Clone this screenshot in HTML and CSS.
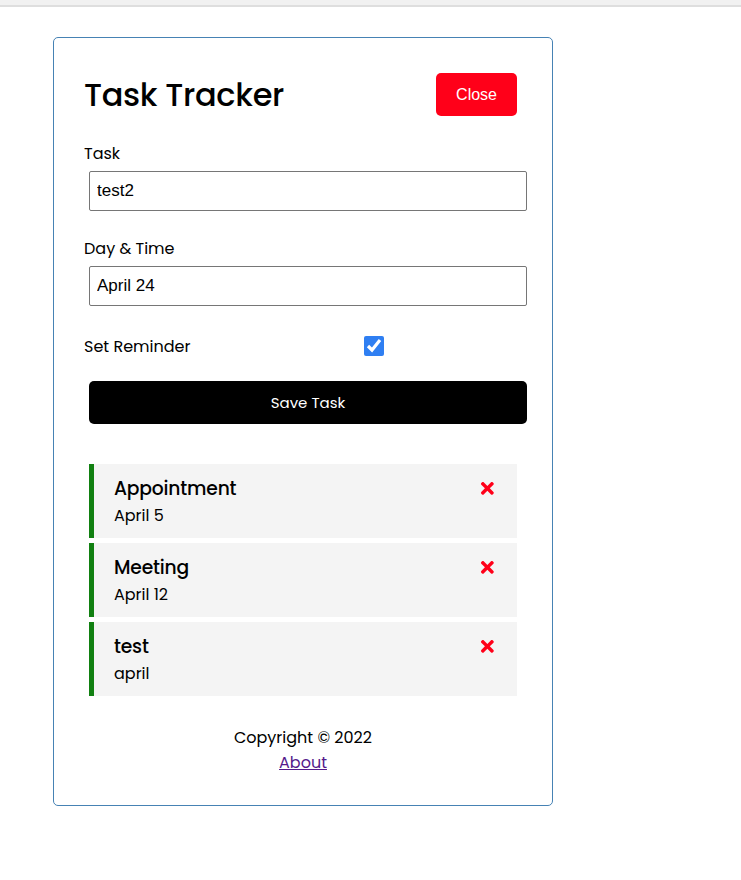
FILE: index.html
```html
<!DOCTYPE html>
<html lang="en">
<head>
<meta charset="utf-8">
<title>Task Tracker</title>
<link rel="stylesheet" href="styles.css">
</head>
<body>
<div class="topbar"></div>
<div class="container">
  <header class="header">
    <h1>Task Tracker</h1>
    <button class="btn btn-close">Close</button>
  </header>
  <form class="add-form">
    <div class="form-control">
      <label>Task</label>
      <input type="text" value="test2">
    </div>
    <div class="form-control form-gap">
      <label>Day &amp; Time</label>
      <input type="text" value="April 24">
    </div>
    <div class="form-control-check">
      <label>Set Reminder</label>
      <div class="check-wrap"><input type="checkbox" checked></div>
    </div>
    <button type="button" class="btn btn-block">Save Task</button>
  </form>
  <div class="tasks">
    <div class="task reminder">
      <h3>Appointment <svg class="x-icon" viewBox="0 0 352 512" fill="currentColor"><path d="M242.72 256l100.07-100.07c12.28-12.28 12.28-32.19 0-44.48l-22.24-22.24c-12.28-12.28-32.19-12.28-44.48 0L176 189.28 75.93 89.21c-12.28-12.28-32.19-12.28-44.48 0L9.21 111.45c-12.28 12.28-12.28 32.19 0 44.48L109.28 256 9.21 356.07c-12.28 12.28-12.28 32.19 0 44.48l22.24 22.24c12.28 12.28 32.2 12.28 44.48 0L176 322.72l100.07 100.07c12.28 12.28 32.2 12.28 44.48 0l22.24-22.24c12.28-12.28 12.28-32.19 0-44.48L242.72 256z"/></svg></h3>
      <p>April 5</p>
    </div>
    <div class="task reminder">
      <h3>Meeting <svg class="x-icon" viewBox="0 0 352 512" fill="currentColor"><path d="M242.72 256l100.07-100.07c12.28-12.28 12.28-32.19 0-44.48l-22.24-22.24c-12.28-12.28-32.19-12.28-44.48 0L176 189.28 75.93 89.21c-12.28-12.28-32.19-12.28-44.48 0L9.21 111.45c-12.28 12.28-12.28 32.19 0 44.48L109.28 256 9.21 356.07c-12.28 12.28-12.28 32.19 0 44.48l22.24 22.24c12.28 12.28 32.2 12.28 44.48 0L176 322.72l100.07 100.07c12.28 12.28 32.2 12.28 44.48 0l22.24-22.24c12.28-12.28 12.28-32.19 0-44.48L242.72 256z"/></svg></h3>
      <p>April 12</p>
    </div>
    <div class="task reminder">
      <h3>test <svg class="x-icon" viewBox="0 0 352 512" fill="currentColor"><path d="M242.72 256l100.07-100.07c12.28-12.28 12.28-32.19 0-44.48l-22.24-22.24c-12.28-12.28-32.19-12.28-44.48 0L176 189.28 75.93 89.21c-12.28-12.28-32.19-12.28-44.48 0L9.21 111.45c-12.28 12.28-12.28 32.19 0 44.48L109.28 256 9.21 356.07c-12.28 12.28-12.28 32.19 0 44.48l22.24 22.24c12.28 12.28 32.2 12.28 44.48 0L176 322.72l100.07 100.07c12.28 12.28 32.2 12.28 44.48 0l22.24-22.24c12.28-12.28 12.28-32.19 0-44.48L242.72 256z"/></svg></h3>
      <p>april</p>
    </div>
  </div>
  <footer class="footer">
    <p>Copyright &copy; 2022</p>
    <a href="#about" class="about-link">About</a>
  </footer>
</div>
</body>
</html>
```
FILE: styles.css
```css
* {
  box-sizing: border-box;
}

body {
  margin: 0;
  font-family: "Poppins", "Open Sans", sans-serif;
  font-size: 16px;
  color: #000;
  background: #fff;
}

.topbar {
  height: 7px;
  background: #f1f1f1;
  border-bottom: 2px solid #dedede;
}

.container {
  width: 500px;
  margin: 30px 0 0 53px;
  padding: 30px;
  border: 1px solid steelblue;
  border-radius: 5px;
}

.header {
  display: flex;
  justify-content: space-between;
  align-items: center;
}

.header h1 {
  margin: 0;
  font-size: 32px;
  line-height: 48px;
  font-weight: 500;
  letter-spacing: -0.01em;
}

.btn {
  display: inline-block;
  margin: 5px;
  padding: 10px 20px;
  border: none;
  border-radius: 5px;
  font-family: inherit;
  font-size: 15px;
  line-height: 23px;
  color: #fff;
  background: #000;
  cursor: pointer;
}

.btn-close {
  font-family: "Liberation Sans", Arial, sans-serif;
  font-size: 16px;
  background: #ff0019;
}

.add-form {
  display: flex;
  flex-direction: column;
  margin-top: 20px;
}

.form-control label {
  display: block;
  line-height: 25px;
}

.form-control input {
  display: block;
  width: 100%;
  height: 40px;
  margin: 5px;
  padding: 3px 7px;
  font-family: "Liberation Sans", Arial, sans-serif;
  font-size: 17px;
  color: #000;
  border: 1px solid #767676;
  border-radius: 2px;
}

.form-gap {
  margin-top: 20px;
}

.form-control-check {
  display: flex;
  align-items: center;
  height: 40px;
  margin-top: 15px;
}

.form-control-check label {
  flex: 1;
}

.check-wrap {
  flex: 2;
  display: flex;
  justify-content: center;
  margin: 0 5px;
}

.check-wrap input {
  width: 20px;
  height: 20px;
  margin: 0;
  accent-color: #2f7ff2;
}

.btn-block {
  display: block;
  width: 100%;
  margin: 15px 5px 0;
}

.tasks {
  margin-top: 40px;
}

.task {
  margin: 0 5px 5px;
  padding: 10px 20px;
  background: #f4f4f4;
}

.task.reminder {
  border-left: 5px solid #118011;
}

.task h3 {
  display: flex;
  justify-content: space-between;
  align-items: center;
  margin: 0;
  font-size: 18.72px;
  line-height: 29px;
  font-weight: 500;
  letter-spacing: -0.01em;
}

.x-icon {
  width: 1em;
  height: 1em;
  color: #ff0019;
}

.task p {
  margin: 0;
  line-height: 25px;
}

.footer {
  margin-top: 30px;
  text-align: center;
}

.footer p {
  margin: 0;
  line-height: 24px;
}

.about-link {
  line-height: 24px;
  color: #551a8b;
}
```
